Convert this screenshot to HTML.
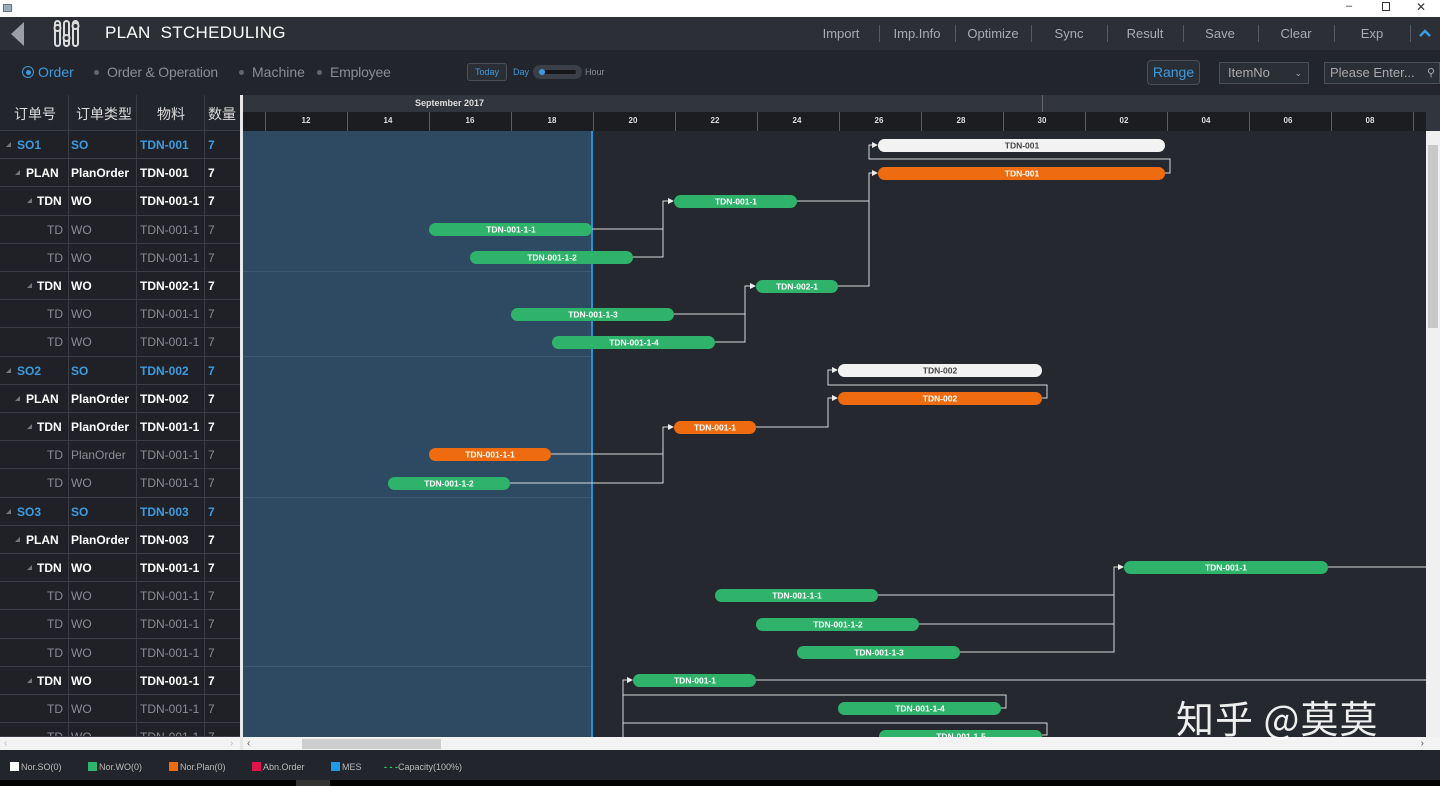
<!DOCTYPE html>
<html><head><meta charset="utf-8"><style>
*{margin:0;padding:0;box-sizing:border-box}
body{width:1440px;height:786px;overflow:hidden;background:#000;font-family:"Liberation Sans","Noto Sans CJK SC",sans-serif;position:relative}
.a{position:absolute}
.row{position:absolute;left:0;width:240px;height:28.2px;border-bottom:1px solid #3a3d44;font-size:12px;line-height:28px;background:#1f2126}
.row span{position:absolute;top:0;white-space:nowrap}
.c2{left:71px}.c3{left:140px}.c4{left:208px}
.b{color:#fff;font-weight:bold}
.u{color:#3d9be0;font-weight:bold}
.g{color:#8a8d93}
.tri{position:absolute;top:11px;width:0;height:0;border-left:5px solid transparent;border-bottom:5px solid #777}
.nav{position:absolute;top:26px;font-size:13px;color:#a9acb2;transform:translateX(-50%)}
.sep{position:absolute;top:25px;width:1px;height:17px;background:#555a63}
.day{position:absolute;top:116px;font-size:8px;font-weight:bold;color:#ddd;transform:translateX(-50%)}
.tk{position:absolute;top:112px;width:1px;height:19px;background:#5a5d64}
.lg{position:absolute;top:762px;font-size:9px;color:#bbb}
.lg i{display:inline-block;width:9px;height:9px;vertical-align:-1px;margin-right:2px}
</style></head><body>
<div class="a" style="left:0;top:0;width:1440px;height:17px;background:#fff"></div>
<div class="a" style="left:3px;top:4px;width:9px;height:8px;background:#9ab;border:1px solid #678"></div>
<div class="a" style="left:1346px;top:0;font-size:11px;color:#333">–</div>
<div class="a" style="left:1382px;top:2px;width:8px;height:9px;border:1px solid #333"></div>
<div class="a" style="left:1416px;top:0;font-size:12px;color:#333">✕</div>
<div class="a" style="left:0;top:17px;width:1440px;height:33px;background:#2c2f36"></div>
<svg class="a" style="left:8px;top:20px" width="20" height="28"><polygon points="16,2 16,26 3,14" fill="#9a9ea6"/></svg>
<svg class="a" style="left:52px;top:19px" width="30" height="30" fill="none" stroke="#ddd" stroke-width="2"><rect x="3" y="2" width="5" height="25" rx="2.5"/><rect x="12" y="2" width="5" height="25" rx="2.5"/><rect x="21" y="2" width="5" height="25" rx="2.5"/><circle cx="5.5" cy="9" r="3" fill="#2c2f36"/><circle cx="14.5" cy="19" r="3" fill="#2c2f36"/><circle cx="23.5" cy="7" r="3" fill="#2c2f36"/></svg>
<div class="a" style="left:105px;top:23px;font-size:17px;color:#fff;letter-spacing:0.3px">PLAN&nbsp; STCHEDULING</div>
<div class="nav" style="left:841px">Import</div><div class="sep" style="left:879px"></div>
<div class="nav" style="left:917px">Imp.Info</div><div class="sep" style="left:955px"></div>
<div class="nav" style="left:993px">Optimize</div><div class="sep" style="left:1031px"></div>
<div class="nav" style="left:1069px">Sync</div><div class="sep" style="left:1107px"></div>
<div class="nav" style="left:1145px">Result</div><div class="sep" style="left:1183px"></div>
<div class="nav" style="left:1220px">Save</div><div class="sep" style="left:1258px"></div>
<div class="nav" style="left:1296px">Clear</div><div class="sep" style="left:1334px"></div>
<div class="nav" style="left:1372px">Exp</div><div class="sep" style="left:1410px"></div>
<svg class="a" style="left:1418px;top:28px" width="14" height="10"><polyline points="2,8 7,3 12,8" fill="none" stroke="#3d9be0" stroke-width="2.5"/></svg>
<div class="a" style="left:0;top:50px;width:1440px;height:45px;background:#22252b"></div>
<div class="a" style="left:22px;top:66px;width:12px;height:12px;border:1.5px solid #3d9be0;border-radius:50%"></div>
<div class="a" style="left:25.5px;top:69.5px;width:5px;height:5px;background:#3d9be0;border-radius:50%"></div>
<div class="a" style="left:38px;top:64px;font-size:14px;color:#3d9be0">Order</div>
<div class="a" style="left:94px;top:70px;width:5px;height:5px;background:#666;border-radius:50%"></div>
<div class="a" style="left:107px;top:64px;font-size:14px;color:#8a8d93;letter-spacing:-0.2px">Order &amp; Operation</div>
<div class="a" style="left:239px;top:70px;width:5px;height:5px;background:#666;border-radius:50%"></div>
<div class="a" style="left:252px;top:64px;font-size:14px;color:#8a8d93">Machine</div>
<div class="a" style="left:317px;top:70px;width:5px;height:5px;background:#666;border-radius:50%"></div>
<div class="a" style="left:330px;top:64px;font-size:14px;color:#8a8d93;letter-spacing:-0.2px">Employee</div>
<div class="a" style="left:467px;top:63px;width:40px;height:18px;border:1px solid #4a4f58;border-radius:3px;background:#2a2e35;color:#3d9be0;font-size:9px;text-align:center;line-height:16px">Today</div>
<div class="a" style="left:513px;top:67px;font-size:9px;color:#3d9be0">Day</div>
<div class="a" style="left:533px;top:65px;width:49px;height:14px;border-radius:7px;background:#3a3f48"></div>
<div class="a" style="left:544px;top:70px;width:32px;height:4px;background:#15171b;border-radius:2px"></div>
<div class="a" style="left:539px;top:69px;width:6px;height:6px;background:#3d9be0;border-radius:50%"></div>
<div class="a" style="left:585px;top:67px;font-size:9px;color:#8a8d93">Hour</div>
<div class="a" style="left:1147px;top:60px;width:53px;height:25px;border:1.5px solid #4a4f58;border-radius:4px;background:#2a2e35;color:#3d9be0;font-size:14px;text-align:center;line-height:22px">Range</div>
<div class="a" style="left:1219px;top:62px;width:90px;height:22px;border:1px solid #4a4f58;background:#2a2e35;color:#aaa;font-size:13px;line-height:20px;padding-left:8px">ItemNo<span style="position:absolute;right:6px;font-size:9px">⌄</span></div>
<div class="a" style="left:1324px;top:62px;width:116px;height:22px;border:1px solid #4a4f58;background:#2a2e35;color:#aaa;font-size:13px;line-height:20px;padding-left:5px">Please Enter...<span style="position:absolute;right:4px;font-size:11px">⚲</span></div>
<div class="a" style="left:0;top:95px;width:240px;height:36px;background:#22252b;border-bottom:1px solid #3a3d44"></div>
<div class="a" style="left:68px;top:95px;width:1px;height:36px;background:#3a3d44"></div>
<div class="a" style="left:136px;top:95px;width:1px;height:36px;background:#3a3d44"></div>
<div class="a" style="left:204px;top:95px;width:1px;height:36px;background:#3a3d44"></div>
<div class="a" style="left:14px;top:104px;font-size:14px;color:#ddd">订单号</div>
<div class="a" style="left:76px;top:104px;font-size:14px;color:#ddd">订单类型</div>
<div class="a" style="left:157px;top:104px;font-size:14px;color:#ddd">物料</div>
<div class="a" style="left:208px;top:104px;font-size:14px;color:#ddd">数量</div>
<div class="row" style="top:131px"><div class="tri" style="left:6px"></div><span style="left:17px" class="u">SO1</span><span class="c2 u">SO</span><span class="c3 u">TDN-001</span><span class="c4 u">7</span></div>
<div class="row" style="top:159.2px"><div class="tri" style="left:15px"></div><span style="left:26px" class="b">PLAN</span><span class="c2 b">PlanOrder</span><span class="c3 b">TDN-001</span><span class="c4 b">7</span></div>
<div class="row" style="top:187.4px"><div class="tri" style="left:27px"></div><span style="left:37px" class="b">TDN</span><span class="c2 b">WO</span><span class="c3 b">TDN-001-1</span><span class="c4 b">7</span></div>
<div class="row" style="top:215.6px"><span style="left:47px" class="g">TD</span><span class="c2 g">WO</span><span class="c3 g">TDN-001-1</span><span class="c4 g">7</span></div>
<div class="row" style="top:243.8px"><span style="left:47px" class="g">TD</span><span class="c2 g">WO</span><span class="c3 g">TDN-001-1</span><span class="c4 g">7</span></div>
<div class="row" style="top:272px"><div class="tri" style="left:27px"></div><span style="left:37px" class="b">TDN</span><span class="c2 b">WO</span><span class="c3 b">TDN-002-1</span><span class="c4 b">7</span></div>
<div class="row" style="top:300.2px"><span style="left:47px" class="g">TD</span><span class="c2 g">WO</span><span class="c3 g">TDN-001-1</span><span class="c4 g">7</span></div>
<div class="row" style="top:328.4px"><span style="left:47px" class="g">TD</span><span class="c2 g">WO</span><span class="c3 g">TDN-001-1</span><span class="c4 g">7</span></div>
<div class="row" style="top:356.6px"><div class="tri" style="left:6px"></div><span style="left:17px" class="u">SO2</span><span class="c2 u">SO</span><span class="c3 u">TDN-002</span><span class="c4 u">7</span></div>
<div class="row" style="top:384.8px"><div class="tri" style="left:15px"></div><span style="left:26px" class="b">PLAN</span><span class="c2 b">PlanOrder</span><span class="c3 b">TDN-002</span><span class="c4 b">7</span></div>
<div class="row" style="top:413px"><div class="tri" style="left:27px"></div><span style="left:37px" class="b">TDN</span><span class="c2 b">PlanOrder</span><span class="c3 b">TDN-001-1</span><span class="c4 b">7</span></div>
<div class="row" style="top:441.2px"><span style="left:47px" class="g">TD</span><span class="c2 g">PlanOrder</span><span class="c3 g">TDN-001-1</span><span class="c4 g">7</span></div>
<div class="row" style="top:469.4px"><span style="left:47px" class="g">TD</span><span class="c2 g">WO</span><span class="c3 g">TDN-001-1</span><span class="c4 g">7</span></div>
<div class="row" style="top:497.6px"><div class="tri" style="left:6px"></div><span style="left:17px" class="u">SO3</span><span class="c2 u">SO</span><span class="c3 u">TDN-003</span><span class="c4 u">7</span></div>
<div class="row" style="top:525.8px"><div class="tri" style="left:15px"></div><span style="left:26px" class="b">PLAN</span><span class="c2 b">PlanOrder</span><span class="c3 b">TDN-003</span><span class="c4 b">7</span></div>
<div class="row" style="top:554px"><div class="tri" style="left:27px"></div><span style="left:37px" class="b">TDN</span><span class="c2 b">WO</span><span class="c3 b">TDN-001-1</span><span class="c4 b">7</span></div>
<div class="row" style="top:582.2px"><span style="left:47px" class="g">TD</span><span class="c2 g">WO</span><span class="c3 g">TDN-001-1</span><span class="c4 g">7</span></div>
<div class="row" style="top:610.4px"><span style="left:47px" class="g">TD</span><span class="c2 g">WO</span><span class="c3 g">TDN-001-1</span><span class="c4 g">7</span></div>
<div class="row" style="top:638.6px"><span style="left:47px" class="g">TD</span><span class="c2 g">WO</span><span class="c3 g">TDN-001-1</span><span class="c4 g">7</span></div>
<div class="row" style="top:666.8px"><div class="tri" style="left:27px"></div><span style="left:37px" class="b">TDN</span><span class="c2 b">WO</span><span class="c3 b">TDN-001-1</span><span class="c4 b">7</span></div>
<div class="row" style="top:695px"><span style="left:47px" class="g">TD</span><span class="c2 g">WO</span><span class="c3 g">TDN-001-1</span><span class="c4 g">7</span></div>
<div class="row" style="top:723.2px;height:14px;overflow:hidden"><span style="left:47px" class="g">TD</span><span class="c2 g">WO</span><span class="c3 g">TDN-001-1</span><span class="c4 g">7</span></div>
<div class="a" style="left:68px;top:131px;width:1px;height:606px;background:#3a3d44"></div>
<div class="a" style="left:136px;top:131px;width:1px;height:606px;background:#3a3d44"></div>
<div class="a" style="left:204px;top:131px;width:1px;height:606px;background:#3a3d44"></div>
<div class="a" style="left:240px;top:95px;width:3px;height:655px;background:#e8e8e8"></div>
<div class="a" style="left:243px;top:95px;width:1183px;height:17px;background:#31353d"></div>
<div class="a" style="left:1042px;top:95px;width:1px;height:17px;background:#666"></div>
<div class="a" style="left:415px;top:98px;font-size:9px;font-weight:bold;color:#ddd">September 2017</div>
<div class="a" style="left:243px;top:112px;width:1197px;height:19px;background:#1b1d21"></div>
<div class="a" style="left:1426px;top:95px;width:14px;height:36px;background:#31353d"></div>
<div class="tk" style="left:265px"></div><div class="tk" style="left:347px"></div><div class="tk" style="left:429px"></div><div class="tk" style="left:511px"></div><div class="tk" style="left:593px"></div><div class="tk" style="left:675px"></div><div class="tk" style="left:757px"></div><div class="tk" style="left:839px"></div><div class="tk" style="left:921px"></div><div class="tk" style="left:1003px"></div><div class="tk" style="left:1085px"></div><div class="tk" style="left:1167px"></div><div class="tk" style="left:1249px"></div><div class="tk" style="left:1331px"></div><div class="tk" style="left:1413px"></div>
<div class="day" style="left:306px">12</div><div class="day" style="left:388px">14</div><div class="day" style="left:470px">16</div><div class="day" style="left:552px">18</div><div class="day" style="left:633px">20</div><div class="day" style="left:715px">22</div><div class="day" style="left:797px">24</div><div class="day" style="left:879px">26</div><div class="day" style="left:961px">28</div><div class="day" style="left:1042px">30</div><div class="day" style="left:1124px">02</div><div class="day" style="left:1206px">04</div><div class="day" style="left:1288px">06</div><div class="day" style="left:1370px">08</div>
<div class="a" style="left:243px;top:131px;width:1183px;height:606px;background:#25282f"></div>
<div class="a" style="left:243px;top:131px;width:349px;height:606px;background:#2d4a62"></div>
<div class="a" style="left:243px;top:271px;width:349px;height:1px;background:#3d5a72"></div>
<div class="a" style="left:243px;top:356px;width:349px;height:1px;background:#3d5a72"></div>
<div class="a" style="left:243px;top:497px;width:349px;height:1px;background:#3d5a72"></div>
<div class="a" style="left:243px;top:666px;width:349px;height:1px;background:#3d5a72"></div>
<div class="a" style="left:591px;top:131px;width:2px;height:606px;background:#2b8fd8"></div>
<svg class="a" style="left:243px;top:131px" width="1183" height="606" viewBox="243 131 1183 606" font-family="Liberation Sans" font-size="8.5" font-weight="bold" text-anchor="middle">
<defs><marker id="ar" markerWidth="6" markerHeight="6" refX="5" refY="3" orient="auto"><path d="M0,0 L6,3 L0,6z" fill="#eee"/></marker></defs>
<g fill="none" stroke="#d8d8d8" stroke-width="1">
<path d="M592,229H663M633,257H663V201H673" marker-end="url(#ar)"/>
<path d="M797,201H869M838,286H869V173H877" marker-end="url(#ar)"/>
<path d="M1165,173H1170V159H869V145H877" marker-end="url(#ar)"/>
<path d="M674,314H745M715,342H745V286H755" marker-end="url(#ar)"/>
<path d="M756,427H828V398H837" marker-end="url(#ar)"/>
<path d="M1042,398H1047V385H828V370H837" marker-end="url(#ar)"/>
<path d="M551,454H663M510,483H663V427H673" marker-end="url(#ar)"/>
<path d="M878,595H1114M919,624H1114M960,652H1114V567H1123" marker-end="url(#ar)"/>
<path d="M1328,567H1426M756,680H1426"/>
<path d="M1001,708H1006V695H623M1042,735H1047V723H623M623,737V680H632" marker-end="url(#ar)"/>
</g>
<g>
<rect x="878" y="139" width="287" height="13" rx="6.5" fill="#f2f2f2"/><text x="1022" y="148.5" fill="#444">TDN-001</text>
<rect x="878" y="167" width="287" height="13" rx="6.5" fill="#ee6b10"/><text x="1022" y="176.5" fill="#fff">TDN-001</text>
<rect x="674" y="195" width="123" height="13" rx="6.5" fill="#2fb36a"/><text x="736" y="204.5" fill="#fff">TDN-001-1</text>
<rect x="429" y="223" width="163" height="13" rx="6.5" fill="#2fb36a"/><text x="511" y="232.5" fill="#fff">TDN-001-1-1</text>
<rect x="470" y="251" width="163" height="13" rx="6.5" fill="#2fb36a"/><text x="552" y="260.5" fill="#fff">TDN-001-1-2</text>
<rect x="756" y="280" width="82" height="13" rx="6.5" fill="#2fb36a"/><text x="797" y="289.5" fill="#fff">TDN-002-1</text>
<rect x="511" y="308" width="163" height="13" rx="6.5" fill="#2fb36a"/><text x="593" y="317.5" fill="#fff">TDN-001-1-3</text>
<rect x="552" y="336" width="163" height="13" rx="6.5" fill="#2fb36a"/><text x="634" y="345.5" fill="#fff">TDN-001-1-4</text>
<rect x="838" y="364" width="204" height="13" rx="6.5" fill="#f2f2f2"/><text x="940" y="373.5" fill="#444">TDN-002</text>
<rect x="838" y="392" width="204" height="13" rx="6.5" fill="#ee6b10"/><text x="940" y="401.5" fill="#fff">TDN-002</text>
<rect x="674" y="421" width="82" height="13" rx="6.5" fill="#ee6b10"/><text x="715" y="430.5" fill="#fff">TDN-001-1</text>
<rect x="429" y="448" width="122" height="13" rx="6.5" fill="#ee6b10"/><text x="490" y="457.5" fill="#fff">TDN-001-1-1</text>
<rect x="388" y="477" width="122" height="13" rx="6.5" fill="#2fb36a"/><text x="449" y="486.5" fill="#fff">TDN-001-1-2</text>
<rect x="1124" y="561" width="204" height="13" rx="6.5" fill="#2fb36a"/><text x="1226" y="570.5" fill="#fff">TDN-001-1</text>
<rect x="715" y="589" width="163" height="13" rx="6.5" fill="#2fb36a"/><text x="797" y="598.5" fill="#fff">TDN-001-1-1</text>
<rect x="756" y="618" width="163" height="13" rx="6.5" fill="#2fb36a"/><text x="838" y="627.5" fill="#fff">TDN-001-1-2</text>
<rect x="797" y="646" width="163" height="13" rx="6.5" fill="#2fb36a"/><text x="879" y="655.5" fill="#fff">TDN-001-1-3</text>
<rect x="633" y="674" width="123" height="13" rx="6.5" fill="#2fb36a"/><text x="695" y="683.5" fill="#fff">TDN-001-1</text>
<rect x="838" y="702" width="163" height="13" rx="6.5" fill="#2fb36a"/><text x="920" y="711.5" fill="#fff">TDN-001-1-4</text>
<rect x="879" y="730" width="163" height="13" rx="6.5" fill="#2fb36a"/><text x="961" y="739.5" fill="#fff">TDN-001-1-5</text>
</g>
</svg>
<div class="a" style="left:1426px;top:131px;width:14px;height:606px;background:#f0f0f0"></div>
<div class="a" style="left:1428px;top:145px;width:10px;height:183px;background:#c8c8c8"></div>
<div class="a" style="left:0;top:737px;width:240px;height:13px;background:#f3f3f3;color:#bbb;font-size:10px;line-height:13px"><span style="position:absolute;left:4px">‹</span><span style="position:absolute;left:230px">›</span></div>
<div class="a" style="left:243px;top:737px;width:1197px;height:13px;background:#f3f3f3;color:#555;font-size:10px;line-height:13px"><span style="position:absolute;left:4px">‹</span><span style="position:absolute;right:16px">›</span></div>
<div class="a" style="left:302px;top:739px;width:139px;height:10px;background:#cdcdcd"></div>
<div class="a" style="left:0;top:750px;width:1440px;height:30px;background:#22252b"></div>
<div class="lg" style="left:10px"><i style="background:#fff"></i>Nor.SO(0)</div>
<div class="lg" style="left:88px"><i style="background:#2fb36a"></i>Nor.WO(0)</div>
<div class="lg" style="left:169px"><i style="background:#ee6b10"></i>Nor.Plan(0)</div>
<div class="lg" style="left:252px"><i style="background:#e0144c"></i>Abn.Order</div>
<div class="lg" style="left:331px"><i style="background:#1e9be8"></i>MES</div>
<div class="lg" style="left:384px"><span style="color:#2fd05a;font-weight:bold">- - -</span>Capacity(100%)</div>
<div class="a" style="left:296px;top:780px;width:34px;height:6px;background:#333"></div>
<div class="a" style="left:1176px;top:693px;font-size:38px;line-height:48px;letter-spacing:1px;color:rgba(255,255,255,0.92);font-family:'Noto Sans CJK SC','Liberation Sans',sans-serif;white-space:nowrap">知乎 @莫莫</div>
</body></html>
